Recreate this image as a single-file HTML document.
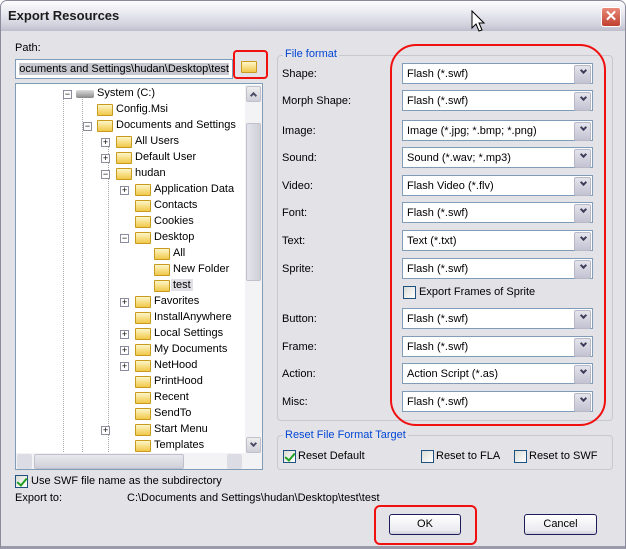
<!DOCTYPE html><html><head><style>
*{box-sizing:border-box}body{margin:0;width:626px;height:549px;overflow:hidden;font-family:"Liberation Sans",Tahoma,sans-serif;font-size:11px;color:#000;background:#fff}
.win{position:absolute;left:0;top:0;width:626px;height:549px;background:#e3e2e7;border:1px solid #8a8a9a;border-bottom:3px solid #9a9aaa;border-radius:7px 7px 0 0;overflow:hidden}
.title{position:absolute;left:0;top:0;width:626px;height:30px;background:linear-gradient(#fdfdfe,#e6e6ee 45%,#d2d2de 80%,#bdbdcc);}
.title span{position:absolute;left:7px;top:7px;font-weight:bold;font-size:13px;color:#1c1c1c}
.close{position:absolute;left:600px;top:6px;width:20px;height:20px;border-radius:3px;background:linear-gradient(#e88a7a,#c0402f);border:1px solid #fff;color:#fff;font-weight:bold;font-size:15px;text-align:center;line-height:18px}
.a{position:absolute;white-space:nowrap}
.combo{position:absolute;left:401px;width:191px;height:21px;background:#fff;border:1px solid #7f9db9;padding:4px 0 0 4px}
.combo:after{content:"";position:absolute;right:1px;top:1px;width:15px;height:17px;background:linear-gradient(#e4e4ec,#c2c2d2);border:1px solid #b8b8c8;border-radius:2px}
.combo i{position:absolute;right:6px;top:4px;width:5px;height:5px;border-right:2px solid #3d3d5a;border-bottom:2px solid #3d3d5a;transform:rotate(45deg);z-index:2}
.cb{position:absolute;width:13px;height:13px;border:1px solid #1c5180;background:linear-gradient(135deg,#dcdcd6,#fff)}
.ck:after{content:"";position:absolute;left:3px;top:0;width:4px;height:8px;border-right:2px solid #21a121;border-bottom:2px solid #21a121;transform:rotate(40deg)}
.grp{position:absolute;border:1px solid #c8c8d0;border-radius:4px}
.red{position:absolute;border:2px solid #f01010}
.f{position:absolute;width:16px;height:12px;background:linear-gradient(#fff6c8,#f0c84a);border:1px solid #c89a20;border-radius:1px}
.p{position:absolute;width:9px;height:9px;border:1px solid #8c8c9c;background:#fff;font-size:9px;line-height:7px;text-align:center;color:#000}
.btn{position:absolute;height:21px;border:1px solid #1c1c5c;border-radius:3px;background:linear-gradient(#fff,#ebebf0 80%,#d0d0dc);text-align:center;line-height:19px}
.sa{position:absolute;width:15px;height:16px;background:linear-gradient(#eee,#cfcfd8);border-radius:2px;border:1px solid #c0c0cc}
.sa b{position:absolute;left:4px;width:5px;height:5px;border-left:2px solid #4d4d6a;border-top:2px solid #4d4d6a}
</style></head><body><div class="win">
<div class="title"><span>Export Resources</span><div class="close">✕</div></div>
<svg class="a" style="left:470px;top:9px" width="14" height="24"><path d="M1 1 L1 18 L5 14 L8 21 L11 20 L8 13 L13 13 Z" fill="#fff" stroke="#000" stroke-width="1"/></svg>
<div class="a" style="left:14px;top:41px">Path:</div>
<div class="a" style="left:14px;top:58px;width:218px;height:20px;background:#fff;border:1px solid #7f9db9;overflow:hidden"><span style="position:absolute;right:3px;top:3px;background:#c8c8d0">ocuments and Settings\hudan\Desktop\test</span></div>
<div class="red" style="left:232px;top:49px;width:35px;height:29px;border-radius:4px"></div>
<div class="f" style="left:240px;top:60px"></div>
<div class="a" style="left:14px;top:82px;width:248px;height:387px;background:#fff;border:1px solid #7f9db9"></div>
<div class="a" style="left:244px;top:84px;width:17px;height:368px;background:#f3f3f6"></div>
<div class="sa" style="left:245px;top:85px"><b style="top:6px;transform:rotate(45deg)"></b></div>
<div class="a" style="left:245px;top:122px;width:15px;height:158px;background:linear-gradient(90deg,#e4e4ec,#cfcfd8);border-radius:2px;border:1px solid #c0c0cc"></div>
<div class="sa" style="left:245px;top:436px"><b style="top:3px;transform:rotate(225deg)"></b></div>
<div class="a" style="left:15px;top:452px;width:246px;height:16px;background:#f3f3f6"></div>
<div class="a" style="left:16px;top:453px;width:15px;height:15px;background:#dcdce4;border-radius:2px"></div>
<div class="a" style="left:33px;top:453px;width:150px;height:15px;background:linear-gradient(#e8e8ee,#cfcfd8);border-radius:2px;border:1px solid #c0c0cc"></div>
<div class="a" style="left:226px;top:453px;width:15px;height:15px;background:#dcdce4;border-radius:2px"></div>
<div class="a" style="left:15px;top:85px;width:228px;height:366px;overflow:hidden">
<div class="a" style="left:47px;top:10px;width:0;height:360px;border-left:1px dotted #aaa"></div>
<div class="a" style="left:66px;top:10px;width:0;height:360px;border-left:1px dotted #aaa"></div>
<div class="a" style="left:92px;top:52px;width:0;height:320px;border-left:1px dotted #aaa"></div>
</div>
<div class="p" style="left:62px;top:89px">−</div><div class="a" style="left:75px;top:89px;width:18px;height:8px;background:linear-gradient(#ddd,#888);border-radius:2px"></div><div class="a" style="left:96px;top:86px">System (C:)</div>
<div class="f" style="left:96px;top:103px"></div><div class="a" style="left:115px;top:102px">Config.Msi</div>
<div class="p" style="left:82px;top:121px">−</div><div class="f" style="left:96px;top:119px"></div><div class="a" style="left:115px;top:118px">Documents and Settings</div>
<div class="p" style="left:100px;top:137px">+</div><div class="f" style="left:115px;top:135px"></div><div class="a" style="left:134px;top:134px">All Users</div>
<div class="p" style="left:100px;top:153px">+</div><div class="f" style="left:115px;top:151px"></div><div class="a" style="left:134px;top:150px">Default User</div>
<div class="p" style="left:100px;top:169px">−</div><div class="f" style="left:115px;top:167px"></div><div class="a" style="left:134px;top:166px">hudan</div>
<div class="p" style="left:119px;top:185px">+</div><div class="f" style="left:134px;top:183px"></div><div class="a" style="left:153px;top:182px">Application Data</div>
<div class="f" style="left:134px;top:199px"></div><div class="a" style="left:153px;top:198px">Contacts</div>
<div class="f" style="left:134px;top:215px"></div><div class="a" style="left:153px;top:214px">Cookies</div>
<div class="p" style="left:119px;top:233px">−</div><div class="f" style="left:134px;top:231px"></div><div class="a" style="left:153px;top:230px">Desktop</div>
<div class="f" style="left:153px;top:247px"></div><div class="a" style="left:172px;top:246px">All</div>
<div class="f" style="left:153px;top:263px"></div><div class="a" style="left:172px;top:262px">New Folder</div>
<div class="f" style="left:153px;top:279px"></div><div class="a" style="left:170px;top:278px;background:#e0e0e6;padding:0 2px">test</div>
<div class="p" style="left:119px;top:297px">+</div><div class="f" style="left:134px;top:295px"></div><div class="a" style="left:153px;top:294px">Favorites</div>
<div class="f" style="left:134px;top:311px"></div><div class="a" style="left:153px;top:310px">InstallAnywhere</div>
<div class="p" style="left:119px;top:329px">+</div><div class="f" style="left:134px;top:327px"></div><div class="a" style="left:153px;top:326px">Local Settings</div>
<div class="p" style="left:119px;top:345px">+</div><div class="f" style="left:134px;top:343px"></div><div class="a" style="left:153px;top:342px">My Documents</div>
<div class="p" style="left:119px;top:361px">+</div><div class="f" style="left:134px;top:359px"></div><div class="a" style="left:153px;top:358px">NetHood</div>
<div class="f" style="left:134px;top:375px"></div><div class="a" style="left:153px;top:374px">PrintHood</div>
<div class="f" style="left:134px;top:391px"></div><div class="a" style="left:153px;top:390px">Recent</div>
<div class="f" style="left:134px;top:407px"></div><div class="a" style="left:153px;top:406px">SendTo</div>
<div class="p" style="left:100px;top:425px">+</div><div class="f" style="left:134px;top:423px"></div><div class="a" style="left:153px;top:422px">Start Menu</div>
<div class="f" style="left:134px;top:439px"></div><div class="a" style="left:153px;top:438px">Templates</div>

<div class="grp" style="left:276px;top:54px;width:336px;height:366px"></div>
<div class="a" style="left:282px;top:47px;color:#0046d5;background:#e3e2e7;padding:0 2px">File format</div>
<div class="a" style="left:281px;top:67px">Shape:</div>
<div class="a" style="left:281px;top:94px">Morph Shape:</div>
<div class="a" style="left:281px;top:124px">Image:</div>
<div class="a" style="left:281px;top:151px">Sound:</div>
<div class="a" style="left:281px;top:179px">Video:</div>
<div class="a" style="left:281px;top:206px">Font:</div>
<div class="a" style="left:281px;top:234px">Text:</div>
<div class="a" style="left:281px;top:262px">Sprite:</div>
<div class="a" style="left:281px;top:312px">Button:</div>
<div class="a" style="left:281px;top:340px">Frame:</div>
<div class="a" style="left:281px;top:367px">Action:</div>
<div class="a" style="left:281px;top:395px">Misc:</div>
<div class="combo" style="top:62px">Flash (*.swf)<i></i></div>
<div class="combo" style="top:89px">Flash (*.swf)<i></i></div>
<div class="combo" style="top:119px">Image (*.jpg; *.bmp; *.png)<i></i></div>
<div class="combo" style="top:146px">Sound (*.wav; *.mp3)<i></i></div>
<div class="combo" style="top:174px">Flash Video (*.flv)<i></i></div>
<div class="combo" style="top:201px">Flash (*.swf)<i></i></div>
<div class="combo" style="top:229px">Text (*.txt)<i></i></div>
<div class="combo" style="top:257px">Flash (*.swf)<i></i></div>
<div class="cb" style="left:402px;top:285px"></div><div class="a" style="left:418px;top:285px">Export Frames of Sprite</div>
<div class="combo" style="top:307px">Flash (*.swf)<i></i></div>
<div class="combo" style="top:335px">Flash (*.swf)<i></i></div>
<div class="combo" style="top:362px">Action Script (*.as)<i></i></div>
<div class="combo" style="top:390px">Flash (*.swf)<i></i></div>
<div class="red" style="left:389px;top:43px;width:216px;height:382px;border-radius:26px"></div>

<div class="grp" style="left:276px;top:434px;width:336px;height:35px"></div>
<div class="a" style="left:282px;top:428px;color:#0046d5;background:#e3e2e7;padding:0 2px">Reset File Format Target</div>
<div class="cb ck" style="left:282px;top:449px"></div><div class="a" style="left:297px;top:449px">Reset Default</div>
<div class="cb" style="left:420px;top:449px"></div><div class="a" style="left:435px;top:449px">Reset to FLA</div>
<div class="cb" style="left:513px;top:449px"></div><div class="a" style="left:528px;top:449px">Reset to SWF</div>

<div class="cb ck" style="left:14px;top:474px"></div><div class="a" style="left:30px;top:474px">Use SWF file name as the subdirectory</div>
<div class="a" style="left:14px;top:491px">Export to:</div>
<div class="a" style="left:126px;top:491px">C:\Documents and Settings\hudan\Desktop\test\test</div>
<div class="btn" style="left:388px;top:513px;width:72px">OK</div>
<div class="red" style="left:373px;top:504px;width:103px;height:40px;border-radius:6px"></div>
<div class="btn" style="left:523px;top:513px;width:73px">Cancel</div>
</div></body></html>
